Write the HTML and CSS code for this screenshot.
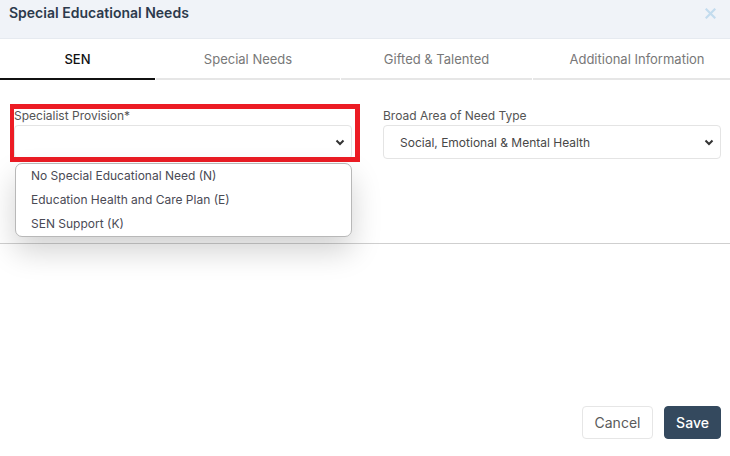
FILE: index.html
```html
<!DOCTYPE html>
<html>
<head>
<meta charset="utf-8">
<link rel="stylesheet" href="styles.css">
</head>
<body>
<div class="modal">
  <div class="header">
    <div class="title">Special Educational Needs</div>
    <svg class="close" width="11" height="11" viewBox="0 0 11 11"><path d="M1.5 1.5l8 8M9.5 1.5l-8 8" stroke="#c3dcee" stroke-width="2.2" stroke-linecap="square"/></svg>
  </div>
  <div class="tabs">
    <div class="tab active">SEN</div>
    <div class="tab">Special Needs</div>
    <div class="tab">Gifted &amp; Talented</div>
    <div class="tab">Additional Information</div>
  </div>
  <div class="form">
    <div class="field">
      <div class="label">Specialist Provision*</div>
      <div class="select">
        <span class="value"></span>
        <svg class="chev" width="10" height="7" viewBox="0 0 10 7"><path d="M1.5 1.5l3.5 3.5 3.5-3.5" fill="none" stroke="#333" stroke-width="2"/></svg>
      </div>
      <div class="highlight"></div>
      <ul class="menu">
        <li>No Special Educational Need (N)</li>
        <li>Education Health and Care Plan (E)</li>
        <li>SEN Support (K)</li>
      </ul>
    </div>
    <div class="field">
      <div class="label">Broad Area of Need Type</div>
      <div class="select">
        <span class="value">Social, Emotional &amp; Mental Health</span>
        <svg class="chev" width="10" height="7" viewBox="0 0 10 7"><path d="M1.5 1.5l3.5 3.5 3.5-3.5" fill="none" stroke="#333" stroke-width="2"/></svg>
      </div>
    </div>
  </div>
  <div class="footer">
    <button class="btn cancel">Cancel</button>
    <button class="btn save">Save</button>
  </div>
</div>
</body>
</html>
```
FILE: styles.css
```css
html, body {
  margin: 0;
  padding: 0;
  background: #fff;
}
body {
  font-family: Inter, "Noto Sans", "Liberation Sans", sans-serif;
  width: 730px;
  height: 456px;
  overflow: hidden;
}
.modal {
  display: flex;
  flex-direction: column;
  height: 456px;
}
.header {
  height: 39px;
  box-sizing: border-box;
  background: #f0f3f8;
  border-bottom: 1px solid #e6eaf0;
  display: flex;
  justify-content: space-between;
  align-items: flex-start;
  padding: 5px 14px 0 9px;
}
.title {
  font-size: 14px;
  font-weight: 600;
  line-height: 16px;
  color: #2c3a4c;
}
.close {
  margin-top: 3px;
}
.tabs {
  display: grid;
  grid-template-columns: 155px 184px 191px 208px;
  column-gap: 1px;
  height: 41px;
  overflow: hidden;
}
.tab {
  display: flex;
  align-items: center;
  justify-content: center;
  font-size: 13px;
  color: #787878;
  border-bottom: 2px solid #e6e6e6;
  padding-top: 1px;
  box-sizing: border-box;
}
.tab.active {
  color: #111;
  font-weight: 500;
  border-bottom: 2px solid #111;
}
.form {
  display: grid;
  grid-template-columns: 338px 338px;
  column-gap: 31px;
  padding: 28px 9px 0 14px;
  height: 164px;
  box-sizing: border-box;
  border-bottom: 1px solid #cfcfcf;
}
.field {
  position: relative;
}
.label {
  font-size: 12px;
  line-height: 16px;
  color: #545454;
  margin-bottom: 1px;
}
.select {
  height: 34px;
  box-sizing: border-box;
  border: 1px solid #e4e4e4;
  border-radius: 4px;
  display: flex;
  align-items: center;
  justify-content: space-between;
  padding: 0 6px 0 16px;
}
.value {
  font-size: 12px;
  color: #474747;
}
.chev {
  margin-top: 1px;
}
.highlight {
  position: absolute;
  left: -4px;
  top: -4px;
  width: 350px;
  height: 58px;
  box-sizing: border-box;
  border: 5px solid #ec1c24;
  border-left-width: 4px;
  pointer-events: none;
}
.menu {
  position: absolute;
  left: 1px;
  top: 55px;
  width: 337px;
  margin: 0;
  padding: 0;
  list-style: none;
  background: #fff;
  border: 1px solid #b8b8b8;
  border-radius: 7px;
  box-sizing: border-box;
  box-shadow: 0 14px 30px rgba(0, 0, 0, 0.18);
  z-index: 2;
}
.menu li {
  font-size: 12px;
  line-height: 24px;
  color: #4a4a55;
  padding-left: 15px;
}
.footer {
  margin-top: auto;
  display: flex;
  justify-content: flex-end;
  gap: 11px;
  padding: 0 9px 17px 0;
}
.btn {
  height: 33px;
  box-sizing: border-box;
  border-radius: 4px;
  font-family: Inter, "Noto Sans", "Liberation Sans", sans-serif;
  font-size: 14px;
  padding: 0;
}
.cancel {
  width: 71px;
  background: #fff;
  border: 1px solid #e6e6e6;
  color: #5a5a5a;
}
.save {
  width: 57px;
  background: #34495e;
  border: 1px solid #34495e;
  color: #fff;
  font-weight: 500;
}
```
